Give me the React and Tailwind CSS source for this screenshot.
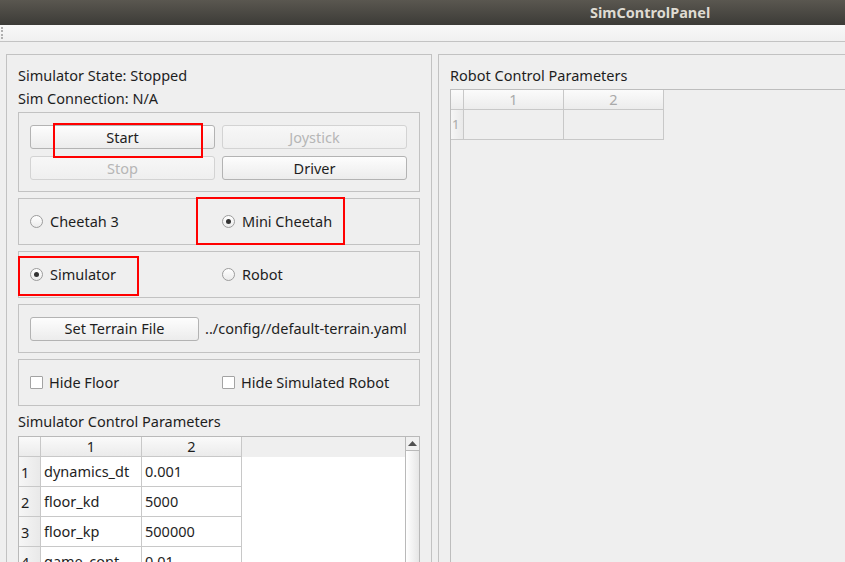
import React from "react";

function Btn({ children, disabled, className = "" }) {
  const look = disabled
    ? "border-[#d3d3d3] text-[#b6b6b6] bg-[linear-gradient(#f7f7f7,#efefef)]"
    : "border-[#b3b3b3] text-[#1e1e1e] bg-[linear-gradient(#fdfdfd,#ececec)]";
  return (
    <div className={`h-[24px] flex items-center justify-center rounded-[3px] border ${look} ${className}`}>
      {children}
    </div>
  );
}

function Radio({ checked, label }) {
  return (
    <div className="flex items-center gap-[7px]">
      <span className="w-[13px] h-[13px] rounded-full border border-[#9c9c9c] bg-[linear-gradient(#ffffff,#ebebeb)] flex items-center justify-center">
        {checked && <span className="w-[5px] h-[5px] rounded-full bg-[#333333]" />}
      </span>
      <span>{label}</span>
    </div>
  );
}

function Check({ label }) {
  return (
    <div className="flex items-center gap-[6px]">
      <span className="w-[13px] h-[13px] rounded-[1px] border border-[#a3a3a3] bg-white" />
      <span>{label}</span>
    </div>
  );
}

function Box({ className = "", children }) {
  return <div className={`border border-[#c2c2c2] ${className}`}>{children}</div>;
}

const rows = [
  ["1", "dynamics_dt", "0.001"],
  ["2", "floor_kd", "5000"],
  ["3", "floor_kp", "500000"],
  ["4", "game_cont…", "0.01"],
];

export default function App() {
  return (
    <div className="relative w-[845px] h-[562px] overflow-hidden bg-[#efefef] text-[14.5px] text-[#1e1e1e] font-['Noto_Sans','Open_Sans',sans-serif] leading-none">
      {/* title bar */}
      <div className="h-[25px] bg-[linear-gradient(#5a5750,#3c3b37)] flex items-center pl-[590px]">
        <span className="text-[14.5px] font-bold text-[#dfdbd2]">SimControlPanel</span>
      </div>
      {/* toolbar */}
      <div className="h-[17px] bg-[linear-gradient(#f8f8f8,#f0f0f0)] border-b border-[#c3c3c3] flex items-center">
        <div className="ml-[1px] w-[3px] h-[12px] border-l-2 border-dotted border-[#b0b0b0]" />
      </div>
      {/* main */}
      <div className="flex gap-[6px] pl-[6px] pt-[12px]">
        {/* left panel */}
        <div className="w-[426px] h-[560px] shrink-0 border border-[#c2c2c2] pl-[11px] pr-[11px] pt-[9px]">
          <div className="h-[23px] flex items-center">Simulator State: Stopped</div>
          <div className="h-[23px] flex items-center">Sim Connection: N/A</div>
          <div className="mt-[2px] flex flex-col gap-[6px]">
            <Box className="h-[80px] pl-[11px] pr-[12px] pt-[12px]">
              <div className="grid grid-cols-2 gap-x-[7px] gap-y-[7px]">
                <Btn>Start</Btn>
                <Btn disabled>Joystick</Btn>
                <Btn disabled>Stop</Btn>
                <Btn>Driver</Btn>
              </div>
            </Box>
            <Box className="h-[47px] pl-[11px] pr-[12px] grid grid-cols-2 gap-x-[7px] items-center">
              <Radio label="Cheetah 3" />
              <Radio checked label="Mini Cheetah" />
            </Box>
            <Box className="h-[47px] pl-[11px] pr-[12px] grid grid-cols-2 gap-x-[7px] items-center">
              <Radio checked label="Simulator" />
              <Radio label="Robot" />
            </Box>
            <Box className="h-[49px] pl-[11px] flex items-center gap-[6px]">
              <Btn className="w-[169px]">Set Terrain File</Btn>
              <span className="whitespace-nowrap">../config//default-terrain.yaml</span>
            </Box>
            <Box className="h-[47px] pl-[11px] pr-[12px] grid grid-cols-2 gap-x-[7px] items-center">
              <Check label="Hide Floor" />
              <Check label="Hide Simulated Robot" />
            </Box>
          </div>
          <div className="h-[30px] flex items-center">Simulator Control Parameters</div>
          {/* left table */}
          <div className="h-[200px] border border-[#b9b9b9] flex">
            <div className="flex-1 flex flex-col bg-white">
              <div className="h-[20px] flex bg-[#efefef]">
                <div className="w-[22px] border-r border-b border-[#c8c8c8] bg-[linear-gradient(#fafafa,#ebebeb)]" />
                <div className="w-[101px] border-r border-b border-[#c8c8c8] bg-[linear-gradient(#fafafa,#ebebeb)] flex items-center justify-center">1</div>
                <div className="w-[100px] border-r border-b border-[#c8c8c8] bg-[linear-gradient(#fafafa,#ebebeb)] flex items-center justify-center">2</div>
              </div>
              {rows.map((r) => (
                <div key={r[0]} className="h-[30px] flex shrink-0">
                  <div className="w-[22px] border-r border-b border-[#c8c8c8] bg-[linear-gradient(90deg,#f6f6f6,#e9e9e9)] flex items-center pl-[2px] pt-[2px]">{r[0]}</div>
                  <div className="w-[101px] border-r border-b border-[#c8c8c8] flex items-center pl-[3px] whitespace-nowrap overflow-hidden">{r[1]}</div>
                  <div className="w-[100px] border-r border-b border-[#c8c8c8] flex items-center pl-[3px]">{r[2]}</div>
                </div>
              ))}
            </div>
            <div className="w-[14px] border-l border-[#b9b9b9] flex flex-col bg-[linear-gradient(90deg,#ffffff,#e6e6e6)]">
              <div className="h-[14px] border-b border-[#b9b9b9] bg-[#f0f0f0] flex items-center justify-center">
                <svg width="9" height="5" viewBox="0 0 9 5"><path d="M4.5 0 L9 5 L0 5 Z" fill="#505050" /></svg>
              </div>
            </div>
          </div>
        </div>
        {/* right panel */}
        <div className="w-[420px] h-[560px] shrink-0 border border-[#c2c2c2] pl-[11px] pt-[9px]">
          <div className="h-[23px] flex items-center">Robot Control Parameters</div>
          <div className="mt-[2px] h-[500px] border-l border-t border-[#bdbdbd]">
            <div className="h-[20px] flex text-[#a9a9a9]">
              <div className="w-[13px] border-r border-b border-[#c8c8c8] bg-[linear-gradient(#fbfbfb,#ececec)]" />
              <div className="w-[100px] border-r border-b border-[#c8c8c8] bg-[linear-gradient(#fbfbfb,#ececec)] flex items-center justify-center">1</div>
              <div className="w-[100px] border-r border-b border-[#c8c8c8] bg-[linear-gradient(#fbfbfb,#ececec)] flex items-center justify-center">2</div>
            </div>
            <div className="h-[30px] flex text-[#a9a9a9]">
              <div className="w-[13px] border-r border-b border-[#c8c8c8] bg-[linear-gradient(90deg,#f6f6f6,#e9e9e9)] flex items-center pl-[1px] text-[13px]">1</div>
              <div className="w-[100px] border-r border-b border-[#c8c8c8]" />
              <div className="w-[100px] border-r border-b border-[#c8c8c8]" />
            </div>
          </div>
        </div>
      </div>
      {/* red annotation boxes */}
      <div className="absolute left-[53px] top-[123px] w-[150px] h-[35px] border-2 border-[#ff0000]" />
      <div className="absolute left-[196px] top-[197px] w-[149px] h-[48px] border-2 border-[#ff0000]" />
      <div className="absolute left-[18px] top-[256px] w-[121px] h-[40px] border-2 border-[#ff0000]" />
    </div>
  );
}
